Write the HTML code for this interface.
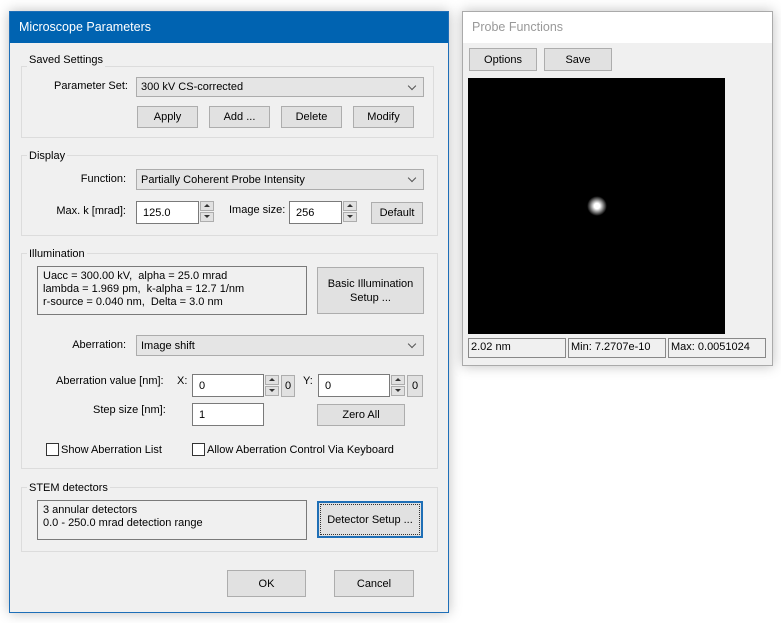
<!DOCTYPE html>
<html><head><style>
body{margin:0;width:781px;height:623px;background:#fff;position:relative;overflow:hidden;font-family:"Liberation Sans",sans-serif;font-size:11px;color:#000}
div,span{position:absolute;box-sizing:border-box}
.win{background:#f0f0f0;border:1px solid #1e6fb8;box-shadow:0 0 12px rgba(0,0,0,.25)}
.grp{border:1px solid #dcdcdc}
.gl{background:#f0f0f0;padding:0 2px;line-height:14px}
.lbl{line-height:14px;white-space:nowrap}
.r{text-align:right}
.btn{background:#e1e1e1;border:1px solid #adadad;text-align:center;display:flex;align-items:center;justify-content:center;line-height:14px}
.cmb{background:#e5e5e5;border:1px solid #acacac;padding-left:4px;display:flex;align-items:center}
.cmb:after{content:"";position:absolute;right:8px;top:5px;width:5px;height:5px;border-right:1px solid #555;border-bottom:1px solid #555;transform:rotate(45deg)}
.inp{background:#fff;border:1px solid #7a7a7a;padding-left:6px;display:flex;align-items:center}
.box{background:#f0f0f0;border:1px solid #7a7a7a;padding:3px 0 0 5px;line-height:13px}
.spin{width:14px}
.spin div{left:0;width:14px;height:10px;background:#e1e1e1;border:1px solid #adadad}
.spin div:after{content:"";position:absolute;left:3px;top:2px;border-left:3px solid transparent;border-right:3px solid transparent}
.up:after{border-bottom:3px solid #333}
.dn:after{border-top:3px solid #333}
.chk{width:13px;height:13px;border:1px solid #333;background:#fff}
.st{border:1px solid #888;background:#f0f0f0;padding-left:2px;line-height:17px}
</style></head><body>

<div class="win" style="left:9px;top:11px;width:440px;height:602px">
<div style="left:0;top:0;width:438px;height:31px;background:#0063b1;color:#fff;font-size:12.5px;line-height:31px;padding-left:9px">Microscope Parameters</div>
</div>

<div class="grp" style="left:21px;top:66px;width:413px;height:72px"></div>
<span class="gl" style="left:27px;top:53px">Saved Settings</span>
<span class="lbl r" style="left:30px;top:79px;width:98px">Parameter Set:</span>
<div class="cmb" style="left:136px;top:77px;width:288px;height:20px">300 kV CS-corrected</div>
<div class="btn" style="left:137px;top:106px;width:61px;height:22px">Apply</div>
<div class="btn" style="left:209px;top:106px;width:61px;height:22px">Add ...</div>
<div class="btn" style="left:281px;top:106px;width:61px;height:22px">Delete</div>
<div class="btn" style="left:353px;top:106px;width:61px;height:22px">Modify</div>

<div class="grp" style="left:21px;top:155px;width:417px;height:81px"></div>
<span class="gl" style="left:27px;top:149px">Display</span>
<span class="lbl r" style="left:30px;top:172px;width:96px">Function:</span>
<div class="cmb" style="left:136px;top:169px;width:288px;height:21px">Partially Coherent Probe Intensity</div>
<span class="lbl r" style="left:30px;top:204px;width:96px">Max. k [mrad]:</span>
<div class="inp" style="left:136px;top:201px;width:63px;height:23px">125.0</div>
<div class="spin" style="left:200px;top:201px"><div class="up" style="top:0"></div><div class="dn" style="top:11px"></div></div>
<span class="lbl" style="left:229px;top:203px">Image size:</span>
<div class="inp" style="left:289px;top:201px;width:53px;height:23px">256</div>
<div class="spin" style="left:343px;top:201px"><div class="up" style="top:0"></div><div class="dn" style="top:11px"></div></div>
<div class="btn" style="left:371px;top:202px;width:52px;height:22px">Default</div>

<div class="grp" style="left:21px;top:253px;width:417px;height:216px"></div>
<span class="gl" style="left:27px;top:247px">Illumination</span>
<div class="box" style="left:37px;top:266px;width:270px;height:49px">Uacc = 300.00 kV,&nbsp; alpha = 25.0 mrad<br>lambda = 1.969 pm,&nbsp; k-alpha = 12.7 1/nm<br>r-source = 0.040 nm,&nbsp; Delta = 3.0 nm</div>
<div class="btn" style="left:317px;top:267px;width:107px;height:47px">Basic Illumination<br>Setup ...</div>
<span class="lbl r" style="left:30px;top:338px;width:96px">Aberration:</span>
<div class="cmb" style="left:136px;top:335px;width:288px;height:21px">Image shift</div>
<span class="lbl" style="left:56px;top:374px">Aberration value [nm]:</span>
<span class="lbl" style="left:177px;top:374px">X:</span>
<div class="inp" style="left:192px;top:374px;width:72px;height:23px">0</div>
<div class="spin" style="left:265px;top:375px"><div class="up" style="top:0"></div><div class="dn" style="top:11px"></div></div>
<div class="btn" style="left:281px;top:375px;width:14px;height:22px">0</div>
<span class="lbl" style="left:303px;top:374px">Y:</span>
<div class="inp" style="left:318px;top:374px;width:72px;height:23px">0</div>
<div class="spin" style="left:391px;top:375px"><div class="up" style="top:0"></div><div class="dn" style="top:11px"></div></div>
<div class="btn" style="left:407px;top:375px;width:16px;height:22px">0</div>
<span class="lbl" style="left:93px;top:403px">Step size [nm]:</span>
<div class="inp" style="left:192px;top:403px;width:72px;height:23px">1</div>
<div class="btn" style="left:317px;top:404px;width:88px;height:22px">Zero All</div>
<div class="chk" style="left:46px;top:443px"></div>
<span class="lbl" style="left:61px;top:443px">Show Aberration List</span>
<div class="chk" style="left:192px;top:443px"></div>
<span class="lbl" style="left:207px;top:443px">Allow Aberration Control Via Keyboard</span>

<div class="grp" style="left:21px;top:487px;width:417px;height:65px"></div>
<span class="gl" style="left:27px;top:481px">STEM detectors</span>
<div class="box" style="left:37px;top:500px;width:270px;height:40px">3 annular detectors<br>0.0 - 250.0 mrad detection range</div>
<div class="btn" style="left:317px;top:501px;width:106px;height:37px;border:2px solid #1f6fb6;outline:1px dotted #333;outline-offset:-4px">Detector Setup ...</div>

<div class="btn" style="left:227px;top:570px;width:79px;height:27px">OK</div>
<div class="btn" style="left:334px;top:570px;width:80px;height:27px">Cancel</div>

<div class="win" style="left:462px;top:11px;width:311px;height:355px;border-color:#aaa">
<div style="left:0;top:0;width:309px;height:31px;background:#fff;color:#999;font-size:12.5px;line-height:31px;padding-left:9px">Probe Functions</div>
</div>
<div class="btn" style="left:469px;top:48px;width:68px;height:23px">Options</div>
<div class="btn" style="left:544px;top:48px;width:68px;height:23px">Save</div>
<div style="left:468px;top:78px;width:257px;height:256px;background:#000">
<div style="left:119px;top:118px;width:20px;height:20px;border-radius:50%;background:radial-gradient(circle,#fff 0,#fff 20%,rgba(255,255,255,.5) 45%,rgba(255,255,255,0) 70%)"></div>
</div>
<div class="st" style="left:468px;top:338px;width:98px;height:20px">2.02 nm</div>
<div class="st" style="left:568px;top:338px;width:98px;height:20px">Min: 7.2707e-10</div>
<div class="st" style="left:668px;top:338px;width:98px;height:20px">Max: 0.0051024</div>
</body></html>
